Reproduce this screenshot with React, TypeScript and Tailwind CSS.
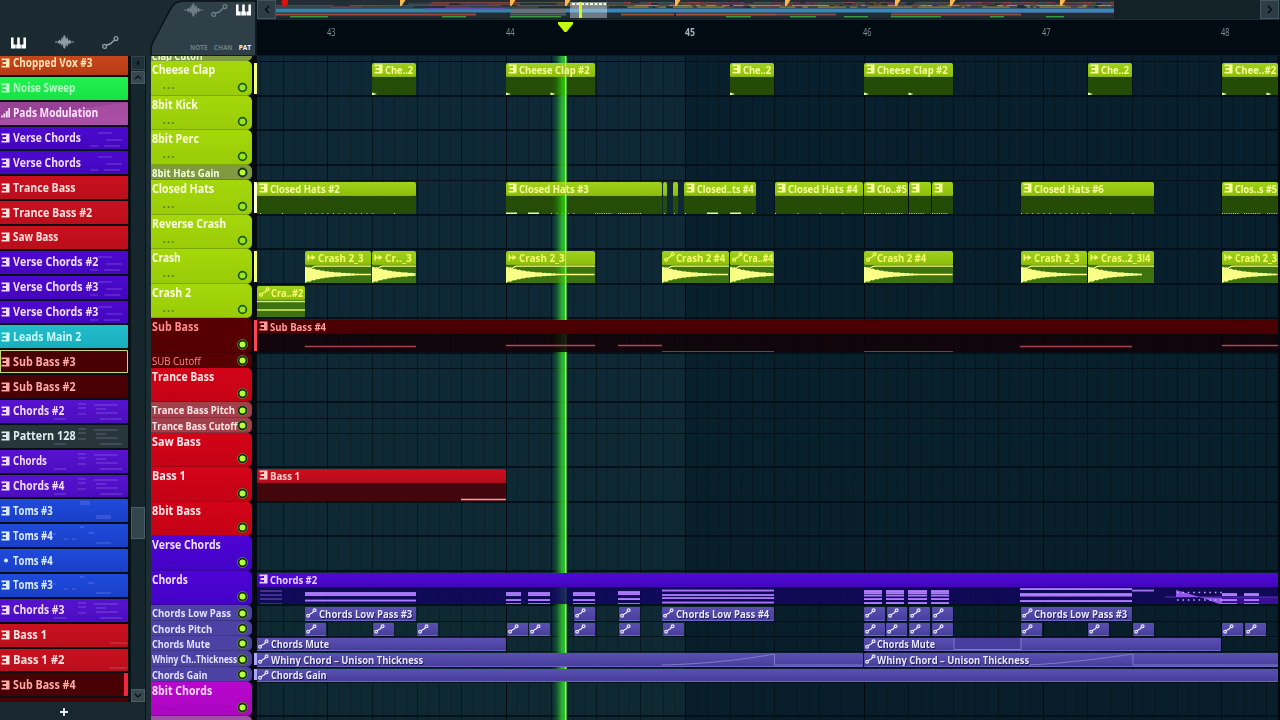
import React, { useLayoutEffect, useRef, useState } from "react";

/* Text squeezed horizontally to a given width. */
function Fit({ text, w, className = "" }: { text: string; w?: number; className?: string }) {
  const ref = useRef<HTMLSpanElement>(null);
  const [k, setK] = useState(1);
  const width = w ?? text.length * 5.62;
  useLayoutEffect(() => {
    if (ref.current && ref.current.offsetWidth) setK(width / ref.current.offsetWidth);
  }, [width, text]);
  return (
    <span ref={ref} className={"inline-block origin-left whitespace-nowrap " + className} style={{ transform: `scaleX(${k})` }}>
      {text}
    </span>
  );
}

type IconKind = "pat" | "audio" | "auto" | "bars" | "dot";

function ClipIcon({ kind }: { kind: IconKind }) {
  if (kind === "pat")
    return (
      <svg width="9" height="10" viewBox="0 0 9 10" className="shrink-0" fill="currentColor">
        <path d="M0.5 0.5H8.5V9.5H0.5V8H5V5.9H1.5V4.1H5V2H0.5Z" />
        <path d="M0.5 2.6H3.5M0.5 7.4H3.5" stroke="currentColor" strokeWidth="0.5" opacity="0.6" />
      </svg>
    );
  if (kind === "audio")
    return (
      <svg width="9" height="9" viewBox="0 0 9 9" className="shrink-0" fill="currentColor">
        <path d="M0.5 1.5H2V3.8H4.6V1.8L8.6 4.5L4.6 7.2V5.2H2V7.5H0.5Z" />
      </svg>
    );
  if (kind === "bars")
    return (
      <svg width="9" height="10" viewBox="0 0 9 10" className="shrink-0" fill="currentColor">
        <path d="M0 7.5H1.8V9.5H0ZM2.4 5.5H4.200V9.5H2.4ZM4.900 3H6.700V9.5H4.900ZM7.300 0H9V9.5H7.300Z" />
      </svg>
    );
  if (kind === "dot")
    return (
      <svg width="9" height="9" viewBox="0 0 9 9" className="shrink-0" fill="currentColor">
        <circle cx="5" cy="4.5" r="2" />
      </svg>
    );
  return (
    <svg width="11" height="10" viewBox="0 0 11 10" className="shrink-0" fill="none" stroke="currentColor" strokeWidth="1.2">
      <circle cx="2.1" cy="7.7" r="1.4" />
      <circle cx="8.6" cy="2.2" r="1.4" />
      <path d="M3.2 6.700L4.500 5.800L6.500 4.700L7.500 3.200" strokeWidth="1.3" />
    </svg>
  );
}

function PianoIcon({ className }: { className: string }) {
  return (
    <svg width="15" height="12" viewBox="0 0 15 12" className={"shrink-0 " + className}>
      <path d="M0 0.5H2.6V7.5H4.7V11.5H0ZM5.2 11.5V7.5H6.2V0.5H8.8V7.5H9.9V11.5ZM10.4 11.5V7.5H12.4V0.5H15V11.5Z" fill="currentColor" />
    </svg>
  );
}
function WaveIcon({ className }: { className: string }) {
  return (
    <svg width="19" height="14" viewBox="0 0 19 14" className={"shrink-0 " + className} fill="currentColor">
      <path d="M0 6.5H3L4.5 4.5L6 6L6.6 2.5H7.6V5L8.6 0.5H10.2L11 4.5L11.8 2.5H12.6L13.4 6L14.6 4.5L16 6.5H19V7.5H16L14.6 9.5L13.4 8L12.6 11.5H11.8L11 9L10.2 13.5H8.6L7.6 9L6.6 11.5L6 8L4.5 9.5L3 7.5H0Z" />
    </svg>
  );
}
function AutoIcon({ className }: { className: string }) {
  return (
    <svg width="17" height="13" viewBox="0 0 17 13" className={"shrink-0 " + className} fill="none" stroke="currentColor" strokeWidth="1.3">
      <circle cx="2.6" cy="10.4" r="1.9" />
      <circle cx="14" cy="2.6" r="1.9" />
      <path d="M4.2 9.3L8 8L12.6 4" strokeWidth="1.6" />
    </svg>
  );
}

/* ---------- pattern picker ---------- */
const RED = "bg-linear-to-b from-[#c9101f] to-[#bb0e1b] text-[#ffe3e0]";
const VIO = "bg-linear-to-b from-[#4c09cf] to-[#4506bd] text-[#f1dcff]";
const VIO2 = "bg-linear-to-b from-[#5712cf] to-[#4c0cc0] text-[#f1dcff]";
const BLU = "bg-linear-to-b from-[#1e4bdc] to-[#1a3fc8] text-[#dcecff]";
const DRK = "bg-[#490004] text-[#ffa9a4]";

const PATTERNS: { t: string; c: string; i?: IconKind; n?: number }[] = [
  { t: "Chopped Vox #3", c: "bg-linear-to-b from-[#c84a1c] to-[#b83a14] text-[#ffe6b8]" },
  { t: "Noise Sweep", c: "bg-linear-to-b from-[#22f050] to-[#17e245] text-[#b6ffc4]" },
  { t: "Pads Modulation", c: "bg-linear-to-b from-[#a34c9f] to-[#aa4fa6] text-[#ffe6ff]", i: "bars" },
  { t: "Verse Chords", c: VIO, n: 1 },
  { t: "Verse Chords", c: VIO, n: 1 },
  { t: "Trance Bass", c: RED },
  { t: "Trance Bass #2", c: RED },
  { t: "Saw Bass", c: RED },
  { t: "Verse Chords #2", c: VIO, n: 1 },
  { t: "Verse Chords #3", c: VIO, n: 1 },
  { t: "Verse Chords #3", c: VIO, n: 1 },
  { t: "Leads Main 2", c: "bg-linear-to-b from-[#22bccb] to-[#18aebd] text-[#c8ffff]" },
  { t: "Sub Bass #3", c: DRK + " ring-1 ring-inset ring-[#c9d870]" },
  { t: "Sub Bass #2", c: DRK },
  { t: "Chords #2", c: VIO2, n: 2 },
  { t: "Pattern 128", c: "bg-[#27363a] text-[#dcebec]", n: 2 },
  { t: "Chords", c: VIO2, n: 2 },
  { t: "Chords #4", c: VIO2, n: 2 },
  { t: "Toms #3", c: BLU, n: 3 },
  { t: "Toms #4", c: BLU, n: 4 },
  { t: "Toms #4", c: BLU, i: "dot" },
  { t: "Toms #3", c: BLU, n: 4 },
  { t: "Chords #3", c: VIO2, n: 2 },
  { t: "Bass 1", c: RED, n: 5 },
  { t: "Bass 1 #2", c: RED, n: 5 },
  { t: "Sub Bass #4", c: DRK + " border-r-4 border-[#f0283c]" },
  { t: "", c: DRK },
];

const THUMBS: Record<number, string> = {
  1: "M98 6H112M106 13H122M90 19H98M104 19H120",
  2: "M78 4H86M78 8H86M94 5H118M96 9H106M78 14H86M96 13H118M54 19H66M100 19H122",
  3: "M80 3H90M80 5H90M96 17H111M96 19H111",
  4: "M80 3H84M50 10H56M88 9H94M64 15H68M72 15H76M96 19H111",
  5: "M110 19H127",
};

function PatternList() {
  return (
    <div className="flex h-[646px] w-[131px] flex-col overflow-hidden bg-[#0a0f14]">
      <div className="-mt-[4px] flex flex-col gap-[2px]">
        {PATTERNS.map((p, i) => (
          <div key={i} className={"relative flex h-[22.870px] w-[128px] shrink-0 items-center gap-[2.500px] overflow-hidden rounded-r-[1px] " + p.c}>
            {i === 2 && (
              <svg className="absolute inset-0" width="128" height="23">
                <path d="M0 0H128L0 18Z" fill="#8e3c90" opacity="0.6" />
              </svg>
            )}
            {p.n && (
              <svg className="absolute inset-0 opacity-15" width="128" height="23">
                <path d={THUMBS[p.n]} stroke="#d8c8ff" strokeWidth="1.8" />
              </svg>
            )}
            {p.t && (
              <>
                <span className="relative ml-px flex">
                  <ClipIcon kind={p.i ?? "pat"} />
                </span>
                <Fit text={p.t} w={p.t.length * 5.68} className="relative text-[12.5px] leading-[16px] font-bold" />
              </>
            )}
          </div>
        ))}
      </div>
    </div>
  );
}

function ScrollBar() {
  return (
    <div className="flex h-[646px] w-[14px] flex-col items-center bg-[#15262d]">
      <div className="flex h-[14px] w-[14px] items-center justify-center border border-[#33464e] bg-[#1e3038]">
        <div className="h-[4px] w-[2px] bg-[#050c10]" />
      </div>
      <div className="mt-px flex h-[13px] w-[14px] items-center justify-center border border-[#4a5c62] bg-[#37494f]">
        <svg width="8" height="5" viewBox="0 0 8 5" fill="none" stroke="#0a1418" strokeWidth="1.4"><path d="M1 4L4 1L7 4" /></svg>
      </div>
      <div className="mt-[423px] h-[32px] w-[14px] border border-[#4b5f66] bg-[#33464d]" />
      <div className="mt-auto flex h-[13px] w-[14px] items-center justify-center border border-[#4a5c62] bg-[#37494f]">
        <svg width="8" height="5" viewBox="0 0 8 5" fill="none" stroke="#0a1418" strokeWidth="1.4"><path d="M1 1L4 4L7 1" /></svg>
      </div>
    </div>
  );
}

/* ---------- tracks ---------- */
type Clip = { a: number; b: number; t?: string; i?: IconKind; tw?: number };
type Tone = "lime" | "limeAuto" | "dark" | "red" | "redAuto" | "vio" | "vioAuto" | "mag";
type Track = { n: string; h: number; tone: Tone; nw?: number; meter?: string; clips?: Clip[]; kind?: string };

const HEAD: Record<Tone, string> = {
  lime: "bg-linear-to-b from-[#a5d80b] to-[#9acb08] text-[#fcffe0]",
  limeAuto: "bg-[#7f9a41] text-[#f3ffd8]",
  dark: "bg-[#570003] text-[#ff8c8f]",
  red: "bg-linear-to-b from-[#d30318] to-[#c40216] text-[#ffeaea]",
  redAuto: "bg-[#a23f4a] text-[#ffe6e6]",
  vio: "bg-linear-to-b from-[#4d04d6] to-[#4402c6] text-[#efe0ff]",
  vioAuto: "bg-[#4c42a4] text-[#e4e2ff]",
  mag: "bg-linear-to-b from-[#b807ce] to-[#ab05c0] text-[#ffddff]",
};

const TRACKS: Track[] = [
  { n: "Cheese Clap", h: 35, tone: "lime", nw: 63, meter: "bg-[#f6ff78]", kind: "clap", clips: [
    { a: 372, b: 416, t: "Che..2", tw: 28 }, { a: 506, b: 595, t: "Cheese Clap #2", tw: 71 }, { a: 729.5, b: 774, t: "Che..2", tw: 28 },
    { a: 863.5, b: 953, t: "Cheese Clap #2", tw: 71 }, { a: 1087.5, b: 1132, t: "Che..2", tw: 28 }, { a: 1221.5, b: 1278, t: "Chee..#2", tw: 41 }] },
  { n: "8bit Kick", h: 34, tone: "lime", nw: 46 },
  { n: "8bit Perc", h: 35, tone: "lime", nw: 47 },
  { n: "8bit Hats Gain", h: 15, tone: "limeAuto", nw: 68 },
  { n: "Closed Hats", h: 35, tone: "lime", nw: 62, meter: "bg-[#ffffd0]", kind: "hats", clips: [
    { a: 257, b: 416, t: "Closed Hats #2", tw: 70 }, { a: 506, b: 662, t: "Closed Hats #3", tw: 70 }, { a: 662.5, b: 667.5 }, { a: 673, b: 678 },
    { a: 684, b: 756, t: "Closed..ts #4", tw: 57 }, { a: 774.5, b: 863, t: "Closed Hats #4", tw: 70 }, { a: 863.5, b: 908, t: "Clo..#5", tw: 30 },
    { a: 909, b: 931, t: "", i: "pat" }, { a: 932, b: 953, t: "", i: "pat" }, { a: 1020.5, b: 1154, t: "Closed Hats #6", tw: 70 }, { a: 1221.5, b: 1278, t: "Clos..s #5", tw: 42 }] },
  { n: "Reverse Crash", h: 34, tone: "lime", nw: 74 },
  { n: "Crash", h: 35, tone: "lime", nw: 29, meter: "bg-[#f6ff78]", kind: "crash", clips: [
    { a: 305, b: 371, t: "Crash 2_3", i: "audio", tw: 46 }, { a: 372, b: 416, t: "Cr.._3", i: "audio", tw: 27 }, { a: 506, b: 595, t: "Crash 2_3", i: "audio", tw: 46 },
    { a: 662, b: 729, t: "Crash 2 #4", i: "auto", tw: 49 }, { a: 729.5, b: 774, t: "Cra..#4", i: "auto", tw: 30 }, { a: 863.5, b: 953, t: "Crash 2 #4", i: "auto", tw: 49 },
    { a: 1020.5, b: 1087, t: "Crash 2_3", i: "audio", tw: 46 }, { a: 1087.5, b: 1154, t: "Cras..2_3⁞4", i: "audio", tw: 49 }, { a: 1221.5, b: 1278, t: "Crash 2_3", i: "audio", tw: 42 }] },
  { n: "Crash 2", h: 34, tone: "lime", nw: 39, kind: "flat", clips: [{ a: 257, b: 305, t: "Cra..#2", i: "auto", tw: 32 }] },
  { n: "Sub Bass", h: 35, tone: "dark", nw: 47, meter: "bg-[#ff4458]", kind: "sub", clips: [{ a: 257, b: 1279, t: "Sub Bass #4", tw: 56 }] },
  { n: "SUB Cutoff", h: 15, tone: "dark", nw: 49 },
  { n: "Trance Bass", h: 34, tone: "red", nw: 62 },
  { n: "Trance Bass Pitch", h: 16, tone: "redAuto", nw: 83 },
  { n: "Trance Bass Cutoff", h: 15, tone: "redAuto", nw: 85 },
  { n: "Saw Bass", h: 34, tone: "red", nw: 49 },
  { n: "Bass 1", h: 35, tone: "red", nw: 34, kind: "bass", clips: [{ a: 257, b: 506, t: "Bass 1", tw: 30 }] },
  { n: "8bit Bass", h: 34, tone: "red", nw: 49 },
  { n: "Verse Chords", h: 35, tone: "vio", nw: 69 },
  { n: "Chords", h: 34, tone: "vio", nw: 36, kind: "chords", clips: [{ a: 257, b: 1279, t: "Chords #2", tw: 47 }] },
  { n: "Chords Low Pass", h: 16, tone: "vioAuto", nw: 79, kind: "auto", clips: [
    { a: 305, b: 416, t: "Chords Low Pass #3", tw: 93 }, { a: 573.5, b: 595, t: "" }, { a: 618.5, b: 640, t: "" }, { a: 662, b: 774, t: "Chords Low Pass #4", tw: 93 },
    { a: 863.5, b: 885, t: "" }, { a: 886.5, b: 907.5, t: "" }, { a: 908.5, b: 930.5, t: "" }, { a: 931.5, b: 953, t: "" }, { a: 1020.5, b: 1132, t: "Chords Low Pass #3", tw: 93 }] },
  { n: "Chords Pitch", h: 15, tone: "vioAuto", nw: 60, kind: "auto", clips: [305, 372.5, 416.5, 506.5, 528.5, 573.5, 618.5, 662.5, 863.5, 886, 908.5, 931.5, 1020.5, 1087.5, 1132.5, 1221.5, 1244.5].map((a) => ({ a, b: a + 21.5, t: "" })) },
  { n: "Chords Mute", h: 15, tone: "vioAuto", nw: 58, kind: "auto", clips: [{ a: 257, b: 506, t: "Chords Mute", tw: 58 }, { a: 863.5, b: 1221, t: "Chords Mute", tw: 58 }] },
  { n: "Whiny Ch..Thickness", h: 16, tone: "vioAuto", nw: 85, meter: "bg-[#aaa6ff]", kind: "auto", clips: [
    { a: 257, b: 863, t: "Whiny Chord – Unison Thickness", tw: 152 }, { a: 863.5, b: 1279, t: "Whiny Chord – Unison Thickness", tw: 152 }] },
  { n: "Chords Gain", h: 15, tone: "vioAuto", nw: 56, meter: "bg-[#aaa6ff]", kind: "auto", clips: [{ a: 257, b: 1279, t: "Chords Gain", tw: 56 }] },
  { n: "8bit Chords", h: 34, tone: "mag", nw: 60 },
];

function Led({ soft }: { soft?: boolean }) {
  return (
    <svg width="11" height="11" viewBox="0 0 11 11" className="shrink-0">
      {soft ? (
        <circle cx="5.5" cy="5.5" r="3.9" fill="#9ce224" stroke="#175c0e" strokeWidth="1.7" />
      ) : (
        <>
          <circle cx="5.5" cy="5.5" r="5" fill="#0b2a08" stroke="#688430" strokeWidth="0.9" />
          <circle cx="5.5" cy="5.5" r="3" fill="#b6ff3a" />
        </>
      )}
    </svg>
  );
}

function TrackHead({ t }: { t: Track }) {
  const big = t.h > 20;
  const soft = t.tone === "lime";
  return (
    <div className="flex w-[107px] shrink-0 gap-[2px] bg-[#040a10]" style={{ height: t.h }}>
      <div className={"flex w-[101px] shrink-0 justify-between overflow-hidden rounded-r-[5px] pr-[4px] pl-[1px] shadow-[inset_0_-1px_0_rgba(0,0,0,0.18)] " + HEAD[t.tone] + (big ? "" : " items-center")}>
        <div className="flex w-[84px] flex-col">
          <Fit text={t.n} w={t.nw} className={big ? "mt-[1px] self-start text-[12.5px] leading-[15px] font-bold" : "-mt-px self-start text-[11px] leading-[15px] " + (t.tone === "dark" ? "font-medium" : "font-bold")} />
          {big && (
            <svg width="22" height="12" viewBox="0 0 22 12" className={soft ? "text-[#47700a]" : "text-black/15"}>
              <path d="M11.500 11H13.200M15.700 11H17.400M19.900 11H21.600" stroke="currentColor" strokeWidth="1.6" />
            </svg>
          )}
        </div>
        <div className={big ? "self-end pb-[3px]" : ""}>
          <Led soft={soft} />
        </div>
      </div>
      <div className={"my-[2px] w-[3px] " + (t.meter ?? "")} />
    </div>
  );
}

const X0 = 257;
const wave = (w: number) => {
  const len = Math.min(w, 90);
  const pts: string[] = [];
  const low: string[] = [];
  for (let x = 0; x <= len; x += 1.5) {
    const j = ((x * 7.3) % 3) / 3;
    const y = Math.max(0.8, 8.7 * Math.exp(-x / 24) * (0.82 + 0.22 * j));
    pts.push(`${x} ${9.5 - y}`);
    low.unshift(`${x} ${9.5 + y}`);
  }
  return "M" + pts.join("L") + "L" + low.join("L") + "Z";
};

const PALE = "#d8ff9c";

function ClapHits({ w }: { w: number }) {
  return (
    <svg className="block h-full w-full" preserveAspectRatio="none">
      <path d={"M0 15.500l5 1.500l-5 1.500z" + (w > 50 ? "M44.500 15.500l5 1.500l-5 1.500z" : "")} fill={PALE} />
    </svg>
  );
}

function HatHits({ a, w }: { a: number; w: number }) {
  const out: [number, number][] = [];
  const dots = (s: number, n: number, step: number) => {
    for (let k = 0; k < n; k++) out.push([s + k * step, 1]);
  };
  if (a === 257) { dots(3, 2, 22); dots(48, 13, 5.6); dots(137, 1, 1); }
  else if (a === 506) { out.push([0, 11], [22, 11]); dots(45, 5, 5.6); dots(89, 8, 2.2); dots(112, 11, 2.2); }
  else if (a === 684) { dots(1, 1, 1); out.push([23, 11], [46, 11]); dots(68, 1, 1); }
  else if (a === 774.5) dots(0, 4, 22.4);
  else if (a === 863.5 || a === 1221.5) { dots(0, 8, 2.2); dots(22, 8, 2.2); dots(45, 5, 2.2); }
  else if (a === 1020.5) { dots(0, 13, 5.6); dots(89, 2, 22.4); }
  else if (w < 8) dots(1, 1, 1);
  else dots(0, 7, 2.3);
  return (
    <svg className="block h-full w-full">
      {out.map(([x, l], k) => (
        <rect key={k} x={x} y={l > 2 ? 16.5 : 17} width={l} height={l > 2 ? 2 : 1.3} fill={PALE} opacity={l > 2 ? 1 : 0.8} />
      ))}
    </svg>
  );
}

function CrashWave({ a, w }: { a: number; w: number }) {
  return (
    <svg className="block h-full w-full">
      <path d={wave(a === 1087.5 ? 55 : w)} fill="#faff86" />
      <path d={`M0 18Q4 1.200 11 1.200H${w}`} fill="none" stroke="#f0ff80" strokeWidth="1.3" />
    </svg>
  );
}

const CHORDS: [number, number, number[], number][] = [
  [260, 282, [4, 8, 12, 17], 0.35],
  [305, 416, [6, 8, 13.5, 17.8], 1],
  [506, 521, [6, 8, 13, 17], 1], [528, 550, [6, 8, 13, 17], 1], [573, 595, [6, 8, 13, 17], 1],
  [618, 640, [5, 7, 12, 17], 1],
  [662, 774, [3.5, 8, 11, 15.5], 0.95],
  [864, 882, [4, 6, 8.5, 12, 16], 1], [886, 904, [4, 6, 8.5, 12, 16], 1], [908, 927, [4, 6, 8.5, 12, 16], 1], [931, 949, [4, 6, 8.5, 12, 16], 1],
  [1020, 1132, [2, 7, 8.5, 14, 18], 1], [1132, 1154, [3.5], 0.9],
  [1222, 1237, [7, 8, 13, 17], 1], [1244, 1259, [7, 8, 13, 17], 1],
];

function Body({ kind, a, w }: { kind: string; a: number; w: number }) {
  if (kind === "clap") return <ClapHits w={w} />;
  if (kind === "hats") return <HatHits a={a} w={w} />;
  if (kind === "crash") return <CrashWave a={a} w={w} />;
  if (kind === "flat")
    return <svg className="block h-full w-full"><path d="M0 1.500H48M0 10H48" stroke="#d2f060" strokeWidth="1.5" /></svg>;
  if (kind === "bass")
    return <svg className="block h-full w-full"><path d="M204 16.500H249" stroke="#ff9c9c" strokeWidth="1.7" /></svg>;
  if (kind === "sub")
    return (
      <svg className="block h-full w-full">
        <path d="M48 12.500H159M763 12.500H875" stroke="#a64450" strokeWidth="1.7" />
        <path d="M249 11.500H338M361 11.500H405M965 11.500H1021" stroke="#b0465c" strokeWidth="1.6" />
        <path d="M405 18H517M607 18H696" stroke="#b0465c" strokeWidth="1.6" />
      </svg>
    );
  return (
    <svg className="block h-full w-full">
      <path d="M965 10H1021V18H965Z" fill="#4a14b4" opacity="0.7" />
      <path d="M908 10H1021" stroke="#6a34cc" strokeWidth="0.9" />
      <path d="M919 3L943 10L965 18V11L943 10L919 10Z" fill="#9155ee" />
      <path d="M920 5.500H965M920 13H965" stroke="#c9a0ff" strokeWidth="1.4" strokeDasharray="1.6 3.8" />
      {CHORDS.map(([s, e, ys, o], k) =>
        ys.map((y) => <rect key={k + "-" + y} x={s - X0} y={y - 0.9} width={e - s} height="1.9" fill="#b07cff" opacity={o} />)
      )}
    </svg>
  );
}

const SKIN: Record<string, [string, string]> = {
  clap: ["bg-linear-to-b from-[#9fd21c] to-[#8fbf08] text-[#f8ff9c]", "bg-[#274f05]/95"],
  hats: ["bg-linear-to-b from-[#9fd21c] to-[#8fbf08] text-[#f8ff9c]", "bg-[#274f05]/95"],
  crash: ["bg-linear-to-b from-[#9fd21c] to-[#8fbf08] text-[#f8ff70]", "bg-[#3c7210]"],
  flat: ["bg-linear-to-b from-[#9fd21c] to-[#8fbf08] text-[#f8ff70]", "bg-[#3c7210]"],
  sub: ["bg-[#4a0003] text-[#ff9a98]", "bg-[#120003]/85"],
  bass: ["bg-linear-to-b from-[#cb0d1e] to-[#b80c1a] text-[#ffd0cc]", "bg-[#42060d]"],
  chords: ["bg-linear-to-b from-[#500ad6] to-[#4205bf] text-[#e8d0ff]", "bg-[#120462]/80"],
};

function ClipBox({ c, t }: { c: Clip; t: Track }) {
  const kind = t.kind ?? "auto";
  const w = c.b - c.a;
  const above = kind === "sub" || kind === "chords" || (kind === "auto" && w > 200);
  if (kind === "auto")
    return (
      <div
        className={"absolute top-[1px] bottom-0 flex items-center overflow-hidden rounded-[1px] border-b border-[#6f66c4] bg-linear-to-b from-[#5a50b2] to-[#483f9c] pl-[1px] text-[#e9e8ff] " + (above ? "z-20" : "z-0")}
        style={{ left: c.a - X0, width: w - 0.5 }}
      >
        {w > 500 && t.n[0] === "W" && (
          <svg className="absolute inset-0" width="1022" height="14">
            <path d="M405 12C450 11 490 6 517.500 1V12H606" fill="none" stroke="#8178d0" strokeWidth="1" />
          </svg>
        )}
        {w > 400 && w < 500 && (
          <svg className="absolute inset-0" width="416" height="14">
            <path d="M165 12C205 10 240 5 269 1V12H416" fill="none" stroke="#8178d0" strokeWidth="1" />
          </svg>
        )}
        {w > 300 && w < 400 && (
          <svg className="absolute inset-0" width="358" height="14">
            <path d="M90 0V11.500H157V0" fill="#463d9c" stroke="#8178d0" strokeWidth="1" />
          </svg>
        )}
        <ClipIcon kind="auto" />
        {c.t && <Fit text={c.t} w={c.tw} className="relative ml-[1.500px] text-[11px] leading-[13px] font-bold [text-shadow:1px_1px_0_#1c1650]" />}
      </div>
    );
  const [head, body] = SKIN[kind];
  return (
    <div className={"absolute top-[1px] bottom-0 flex flex-col overflow-hidden " + (above ? "z-20" : "z-0")} style={{ left: c.a - X0, width: w - 0.4 }}>
      <div className={"flex h-[14px] shrink-0 items-center rounded-t-[2px] rounded-b-[1px] border-b border-black/15 " + head + (c.t === undefined ? "" : " pl-[2px]")}>
        {c.t !== undefined && <ClipIcon kind={c.i ?? "pat"} />}
        {c.t && <Fit text={c.t} w={c.tw} className={"text-[11.3px] leading-[15px] font-bold " + (c.i === "auto" ? "ml-[0.500px]" : "ml-[2px]")} />}
      </div>
      <div className={"min-h-0 flex-1 " + body}>
        <Body kind={kind} a={c.a} w={w} />
      </div>
    </div>
  );
}

function GridLines() {
  const bar = 178.8;
  const lines: React.ReactNode[] = [];
  for (let k = -1; k < 100; k++) {
    const x = 327.3 - 5 * (bar / 16) + k * (bar / 16) - X0;
    const m = (((k - 5) % 16) + 16) % 16;
    if (x < 0 || x > 1021) continue;
    lines.push(<rect key={k} x={Math.round(x)} y="0" width={1} height="664" fill="#00060c" opacity={m === 0 ? 0.85 : m % 4 === 0 ? 0.5 : m % 2 === 0 ? 0.28 : 0.18} />);
  }
  return <svg className="pointer-events-none absolute inset-0" width="1021" height="664">{lines}</svg>;
}

function Lanes() {
  return (
    <div className="relative isolate flex w-[1021px] flex-col overflow-hidden bg-linear-to-b from-[#0e2837] to-[#0e2932]">
      <div className="absolute top-0 bottom-0 left-[428px] w-[593px] bg-[#021624]/50" />
      <GridLines />
      <div className="h-[5.500px] shrink-0 border-b border-[#02080d]" />
      {TRACKS.map((t, i) => (
        <div key={i} className={"relative w-full shrink-0 border-[#020d16]/85 " + (t.h > 20 ? "border-b-2" : "border-b")} style={{ height: t.h }}>
          {t.clips?.map((c, k) => <ClipBox key={k} c={c} t={t} />)}
        </div>
      ))}
      <div className="pointer-events-none absolute top-0 bottom-0 left-[295px] z-10 flex w-[15px] mix-blend-lighten">
        <div className="w-[9px] bg-linear-to-r from-[#1c9000]/0 via-[#1f8a00]/40 to-[#259e00]" />
        <div className="w-[4px] bg-linear-to-r from-[#28a800] to-[#30c000]" />
        <div className="w-[1px] bg-[#80ff4a]" />
        <div className="w-[1px] bg-[#56c830]/80" />
      </div>
    </div>
  );
}

/* ---------- overview strip ---------- */
function Overview() {
  const cells: React.ReactNode[] = [];
  let s = 17;
  const rnd = () => ((s = (s * 1103515245 + 12345) % 2147483648) / 2147483648);
  const cols = ["#6f3a50", "#8a4a3c", "#5a4a80", "#6a5a40", "#4f5a48", "#3f5a60", "#a04a50", "#23323a"];
  for (let y = 2; y < 8; y += 1.5) {
    let x = 0;
    while (x < 838) {
      const l = x < 340 ? 10 + rnd() * 34 : 2 + rnd() * 9;
      const f = x > 350 && y > 4.5 && rnd() > 0.45 ? "#b8a234" : cols[Math.floor(rnd() * 8)];
      cells.push(<rect key={x + "_" + y} x={x} y={y} width={Math.min(l, 838 - x)} height="1.2" fill={x < 125 && y < 5 ? "#26303a" : f} opacity="0.85" />);
      x += l;
    }
  }
  const reds: [number, number, string][] = [[0, 200, "#a0443a"], [234, 290, "#575e62"], [345, 398, "#94502f"], [400, 500, "#a0503c"], [500, 560, "#7a4b46"], [615, 745, "#8a4c42"]];
  const greens: [number, number][] = [[14, 52], [166, 190], [234, 285], [450, 475], [514, 540], [568, 592], [615, 665], [714, 728], [770, 788]];
  return (
    <svg width="984" height="19" viewBox="0 0 984 19" className="shrink-0 bg-[#132227]">
      <rect width="838" height="18" fill="#2a3038" opacity="0.7" />
      {cells}
      <rect x="0" y="8.500" width="235" height="4" fill="#3484a8" />
      <rect x="235" y="8.500" width="54" height="4.500" fill="#66727c" />
      <rect x="289" y="8.500" width="549" height="4" fill="#3a86b8" />
      <rect x="150" y="8" width="80" height="1.500" fill="#5a4fb0" />
      <rect x="616" y="11" width="222" height="1.500" fill="#5a74b8" />
      {reds.map(([a, b, f], i) => <rect key={i} x={a} y="13.500" width={b - a} height="2" fill={f} />)}
      {greens.map(([a, b], i) => <rect key={i} x={a} y="16" width={b - a} height="1.400" fill="#3a9a44" />)}
      <rect x="294" y="2" width="37" height="16" fill="#dce8f0" opacity="0.42" />
      <path d="M296 4H330" stroke="#f4f4e0" strokeWidth="2" strokeDasharray="3 1.500" />
      <rect x="303" y="2" width="3" height="16" fill="#d8f020" />
      {[124, 234, 289, 399, 509, 619, 674, 784].map((x) => <path key={x} d={`M${x} 0H${x + 5.5}L${x + 1.5} 6H${x}Z`} fill="#ffb84a" />)}
      <path d="M6 0H12V4L8 7L5.500 3Z" fill="#e01010" />
    </svg>
  );
}

function ArrowBox({ d }: { d: string }) {
  return (
    <div className="flex h-[19px] w-[19px] shrink-0 items-center justify-center border border-[#44565e] bg-[#2c3d45]">
      <svg width="6" height="9" viewBox="0 0 6 9" fill="none" stroke="#070d10" strokeWidth="1.500"><path d={d} /></svg>
    </div>
  );
}

function Header() {
  return (
    <div className="flex h-[56px] w-[1280px] shrink-0 bg-[#1b2a30]">
      <div className="flex w-[150px] shrink-0 items-end gap-[29px] pb-[7px] pl-[11px]">
        <PianoIcon className="text-white" />
        <WaveIcon className="text-[#8e9da2]" />
        <AutoIcon className="-ml-[1px] text-[#8e9da2]" />
      </div>
      <div className="relative w-[107px] shrink-0">
        <svg className="absolute inset-0" width="107" height="56" viewBox="0 0 107 56">
          <path d="M1 56V50C1 45 3 42 5 38L20 10C24 3 27 1 35 1H106V56Z" fill="#2e3f48" stroke="#0a1216" strokeWidth="1.500" />
        </svg>
        <div className="relative flex h-full flex-col justify-between pr-[6px] pb-[3px]">
          <div className="flex items-center justify-end gap-[8px] pt-[3px]">
            <WaveIcon className="text-[#6d7e85]" />
            <AutoIcon className="text-[#6d7e85]" />
            <PianoIcon className="text-white" />
          </div>
          <div className="flex justify-end gap-[6px] text-[#6c7d85]">
            <Fit text="NOTE" w={18} className="text-[6.500px] leading-[11px] font-bold" />
            <Fit text="CHAN" w={19} className="text-[6.500px] leading-[11px] font-bold" />
            <Fit text="PAT" w={12} className="text-[6.500px] leading-[11px] font-bold text-[#f2f6f7]" />
          </div>
        </div>
      </div>
      <div className="flex w-[1023px] shrink-0 flex-col bg-[#020b12]">
        <div className="flex h-[20px] border-b border-[#1b2e38] bg-[#132227]">
          <ArrowBox d="M5 1L1.500 4.500L5 8" />
          <Overview />
          <ArrowBox d="M1 1L4.500 4.500L1 8" />
        </div>
        <Ruler />
      </div>
    </div>
  );
}

function Ruler() {
  return (
    <div className="relative flex h-[36px] overflow-hidden border-b border-[#0d1d27] pl-[70px] text-[10.500px] text-[#7d929c]">
      {[43, 44, 45, 46, 47, 48].map((n) => (
        <div key={n} className="w-[178.800px] shrink-0 pt-[5px]">
          <Fit text={String(n)} w={n === 45 ? 10 : 8.5} className={"leading-[15px] " + (n === 45 ? "font-bold text-[#a3b4bb]" : "font-medium")} />
        </div>
      ))}
      <svg className="absolute top-[2px] left-[301px]" width="15" height="11" viewBox="0 0 15 11">
        <path d="M0 0H15V2L8.500 10H6.500L0 2Z" fill="#c4fa10" />
      </svg>
    </div>
  );
}

export default function App() {
  return (
    <div className="flex h-[720px] w-[1280px] flex-col overflow-hidden bg-[#03080c] font-['Open_Sans','Noto_Sans',sans-serif]">
      <Header />
      <div className="flex min-h-0 flex-1">
        <div className="flex w-[145px] shrink-0 flex-col bg-[#18282e]">
          <div className="flex h-[646px]">
            <PatternList />
            <ScrollBar />
          </div>
          <div className="flex flex-1 items-center pt-[2px] pl-[60px]">
            <svg width="8" height="8" viewBox="0 0 8 8"><path d="M4 0V8M0 4H8" stroke="#e6eef0" strokeWidth="2" /></svg>
          </div>
        </div>
        <div className="w-[6px] shrink-0 border-l border-[#0a1419] bg-[#1d2d34]" />
        <div className="flex w-[106px] shrink-0 flex-col overflow-hidden">
          <div className="flex h-[5px] w-[101px] shrink-0 items-end overflow-hidden rounded-br-[5px] bg-[#7f9a41]">
            <Fit text="Clap Cutoff" w={52} className="pl-[1px] text-[11px] leading-[11px] font-bold text-[#f3ffd8]" />
          </div>
          {TRACKS.map((t, i) => <TrackHead key={i} t={t} />)}
          <div className="h-[5px] w-[101px] shrink-0 rounded-tr-[5px] bg-[#a050a8]" />
        </div>
        <Lanes />
      </div>
    </div>
  );
}
